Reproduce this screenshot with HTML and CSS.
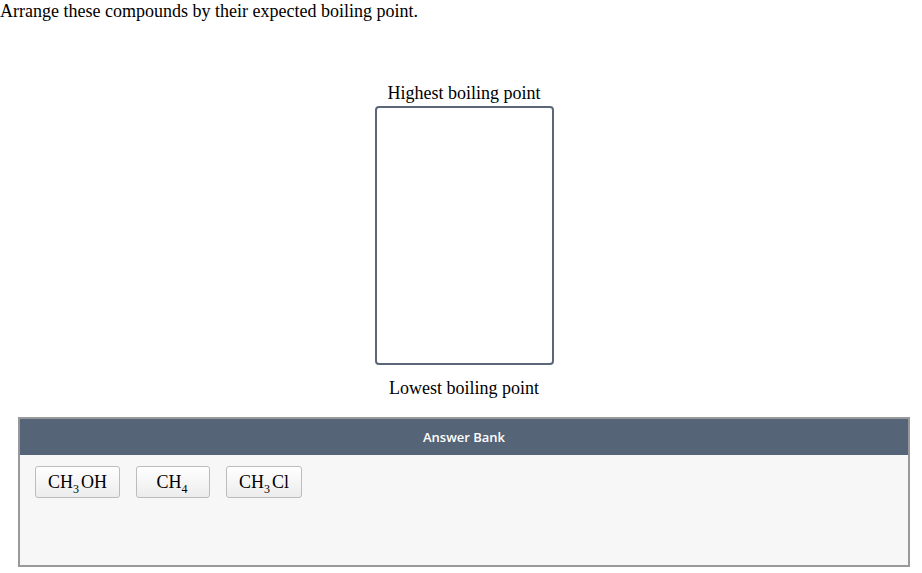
FILE: index.html
```html
<!DOCTYPE html>
<html>
<head>
  <title>Boiling Point Ranking</title>
  <link rel="stylesheet" href="styles.css">
</head>
<body>
  <p class="question">Arrange these compounds by their expected boiling point.</p>

  <div class="ranking">
    <div class="rank-label">Highest boiling point</div>
    <div class="drop-box" id="dropBox"></div>
    <div class="rank-label">Lowest boiling point</div>
  </div>

  <div class="answer-bank">
    <div class="bank-header">Answer Bank</div>
    <div class="bank-body">
      <button class="chip">CH<sub>3</sub>OH</button>
      <button class="chip">CH<sub>4</sub></button>
      <button class="chip">CH<sub>3</sub>Cl</button>
    </div>
  </div>
</body>
</html>
```

FILE: styles.css
```css
body {
  font-family: "Liberation Serif", "Times New Roman", serif;
  margin: 0;
  padding: 0;
  background-color: #fff;
  color: #000;
}

.question {
  margin: 0;
  padding-top: 1px;
  font-size: 18px;
  line-height: 20px;
}

.ranking {
  display: flex;
  flex-direction: column;
  align-items: center;
  margin-top: 62px;
  margin-left: 18px;
  width: 892px;
}

.rank-label {
  font-size: 18px;
  line-height: 20px;
}

.drop-box {
  width: 175px;
  height: 255px;
  margin: 3px 0 13px;
  border: 2px solid #5b6679;
  border-radius: 4px;
  background-color: #fff;
}

.answer-bank {
  margin: 19px 0 0 18px;
  width: 888px;
  border: 2px solid #999;
}

.bank-header {
  height: 36px;
  line-height: 36px;
  text-align: center;
  background-color: #566478;
  color: #fff;
  font-family: "Open Sans", "Noto Sans", sans-serif;
  font-size: 13px;
  font-weight: 600;
}

.bank-body {
  display: flex;
  gap: 16px;
  height: 99px;
  padding: 11px 15px 0;
  background-color: #f7f7f7;
  align-items: flex-start;
}

.chip {
  min-width: 74px;
  height: 32px;
  padding: 0 12px;
  font-family: "Liberation Serif", "Times New Roman", serif;
  font-size: 18px;
  color: #000;
  background: linear-gradient(#ffffff, #ececec);
  border: 1px solid #bcbcbc;
  border-radius: 3px;
  cursor: pointer;
}

.chip sub {
  font-size: 12px;
  vertical-align: -5px;
  line-height: 0;
  margin-right: 2px;
}
```
